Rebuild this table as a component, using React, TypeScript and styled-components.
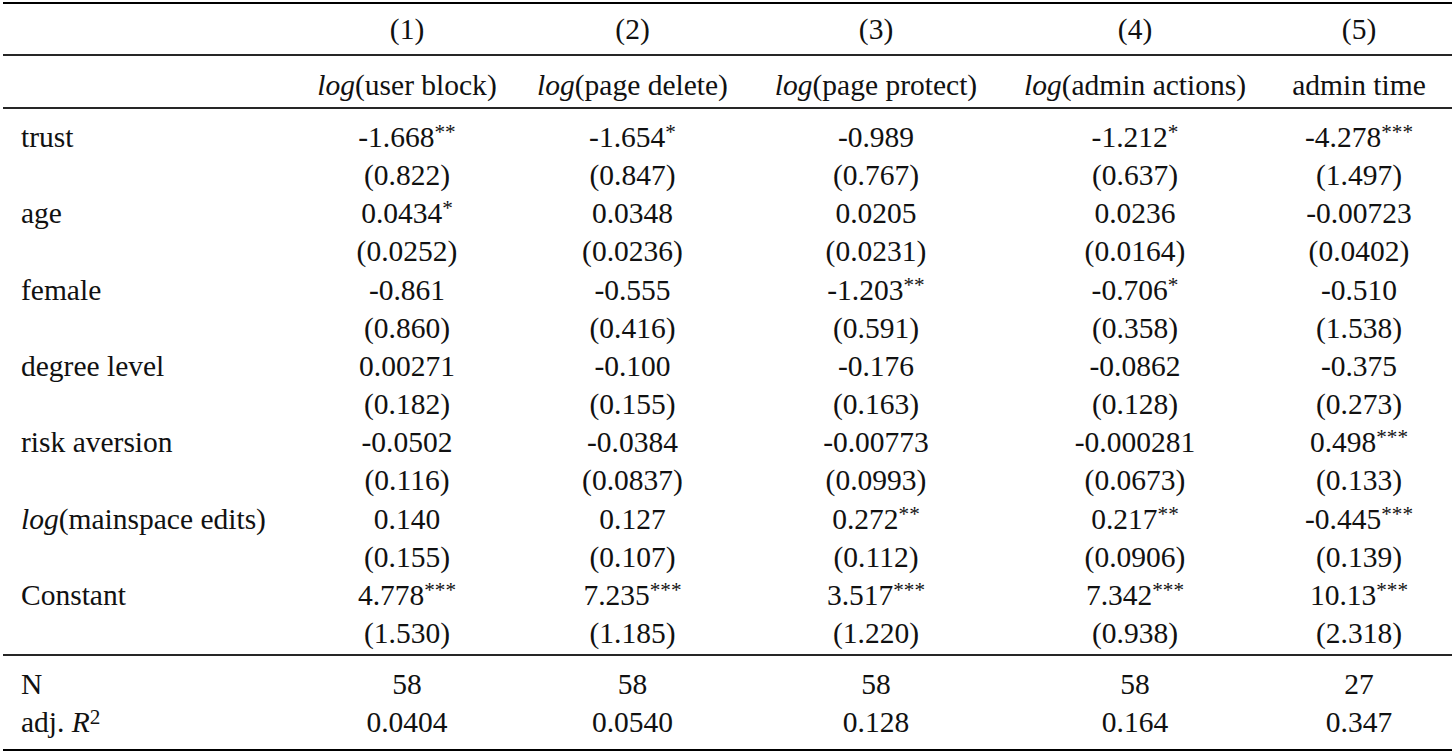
import styled, { createGlobalStyle } from "styled-components";

const GlobalStyle = createGlobalStyle`
  html, body {
    margin: 0;
    padding: 0;
    background: #ffffff;
  }
  body {
    font-family: "Liberation Serif", "DejaVu Serif", serif;
    color: #111111;
  }
`;

const Wrapper = styled.div`
  padding: 2px 0 0 3px;
`;

const Table = styled.table`
  width: 1449px;
  table-layout: fixed;
  border-collapse: collapse;
  border-top: 2px solid #000;
  border-bottom: 2px solid #000;
  font-size: 29.5px;
`;

const HeadRow = styled.tr<{ $height: number }>`
  height: ${(p) => p.$height}px;
  border-bottom: 2px solid #262626;
`;

const HeadCell = styled.th<{ $shift?: number }>`
  font-weight: normal;
  text-align: center;
  padding: ${(p) => p.$shift ?? 0}px 0 0 0;
  vertical-align: middle;
  white-space: nowrap;
`;

const Row = styled.tr<{ $rule?: boolean }>`
  ${(p) => (p.$rule ? "border-bottom: 2px solid #262626;" : "")}
`;

const LabelCell = styled.td<{ $top?: number; $bottom?: number }>`
  text-align: left;
  padding: ${(p) => p.$top ?? 0}px 0 ${(p) => p.$bottom ?? 0}px 18px;
  line-height: 38.15px;
  white-space: nowrap;
`;

const Cell = styled.td<{ $top?: number; $bottom?: number }>`
  text-align: center;
  padding: ${(p) => p.$top ?? 0}px 0 ${(p) => p.$bottom ?? 0}px 0;
  line-height: 38.15px;
  white-space: nowrap;
`;

const Stars = styled.sup`
  font-size: 0.72em;
  line-height: 0;
  vertical-align: 0.38em;
`;

const Ital = styled.i`
  font-style: italic;
`;

type Coef = [string, string];

const widths = [294, 220, 231, 256, 262, 186];

const depVars: Array<[string, string]> = [
  ["log", "user block"],
  ["log", "page delete"],
  ["log", "page protect"],
  ["log", "admin actions"],
  ["", "admin time"],
];

const vars: Array<{ label: React.ReactNode; coef: Coef[]; se: string[] }> = [
  {
    label: "trust",
    coef: [["-1.668", "**"], ["-1.654", "*"], ["-0.989", ""], ["-1.212", "*"], ["-4.278", "***"]],
    se: ["0.822", "0.847", "0.767", "0.637", "1.497"],
  },
  {
    label: "age",
    coef: [["0.0434", "*"], ["0.0348", ""], ["0.0205", ""], ["0.0236", ""], ["-0.00723", ""]],
    se: ["0.0252", "0.0236", "0.0231", "0.0164", "0.0402"],
  },
  {
    label: "female",
    coef: [["-0.861", ""], ["-0.555", ""], ["-1.203", "**"], ["-0.706", "*"], ["-0.510", ""]],
    se: ["0.860", "0.416", "0.591", "0.358", "1.538"],
  },
  {
    label: "degree level",
    coef: [["0.00271", ""], ["-0.100", ""], ["-0.176", ""], ["-0.0862", ""], ["-0.375", ""]],
    se: ["0.182", "0.155", "0.163", "0.128", "0.273"],
  },
  {
    label: "risk aversion",
    coef: [["-0.0502", ""], ["-0.0384", ""], ["-0.00773", ""], ["-0.000281", ""], ["0.498", "***"]],
    se: ["0.116", "0.0837", "0.0993", "0.0673", "0.133"],
  },
  {
    label: (
      <>
        <Ital>log</Ital>(mainspace edits)
      </>
    ),
    coef: [["0.140", ""], ["0.127", ""], ["0.272", "**"], ["0.217", "**"], ["-0.445", "***"]],
    se: ["0.155", "0.107", "0.112", "0.0906", "0.139"],
  },
  {
    label: "Constant",
    coef: [["4.778", "***"], ["7.235", "***"], ["3.517", "***"], ["7.342", "***"], ["10.13", "***"]],
    se: ["1.530", "1.185", "1.220", "0.938", "2.318"],
  },
];

const nObs = ["58", "58", "58", "58", "27"];
const adjR2 = ["0.0404", "0.0540", "0.128", "0.164", "0.347"];

function App() {
  const last = vars.length - 1;
  return (
    <Wrapper>
      <GlobalStyle />
      <Table>
        <colgroup>
          {widths.map((w, i) => (
            <col key={i} style={{ width: w }} />
          ))}
        </colgroup>
        <thead>
          <HeadRow $height={52}>
            <HeadCell />
            {[1, 2, 3, 4, 5].map((n) => (
              <HeadCell key={n} $shift={1}>
                ({n})
              </HeadCell>
            ))}
          </HeadRow>
          <HeadRow $height={53}>
            <HeadCell />
            {depVars.map(([fn, name]) => (
              <HeadCell key={name} $shift={7}>
                {fn ? (
                  <>
                    <Ital>{fn}</Ital>({name})
                  </>
                ) : (
                  name
                )}
              </HeadCell>
            ))}
          </HeadRow>
        </thead>
        <tbody>
          {vars.map((v, i) => {
            const top = i === 0 ? 9 : 0;
            const bottom = i === last ? 2 : 0;
            return [
              <Row key={`c${i}`}>
                <LabelCell $top={top}>{v.label}</LabelCell>
                {v.coef.map(([val, st], j) => (
                  <Cell key={j} $top={top}>
                    {val}
                    {st && <Stars>{st}</Stars>}
                  </Cell>
                ))}
              </Row>,
              <Row key={`s${i}`} $rule={i === last}>
                <LabelCell $bottom={bottom} />
                {v.se.map((s, j) => (
                  <Cell key={j} $bottom={bottom}>
                    ({s})
                  </Cell>
                ))}
              </Row>,
            ];
          })}
          <Row>
            <LabelCell $top={9}>N</LabelCell>
            {nObs.map((n, j) => (
              <Cell key={j} $top={9}>
                {n}
              </Cell>
            ))}
          </Row>
          <Row>
            <LabelCell $bottom={7}>
              adj. <Ital>R</Ital>
              <Stars>2</Stars>
            </LabelCell>
            {adjR2.map((r, j) => (
              <Cell key={j} $bottom={7}>
                {r}
              </Cell>
            ))}
          </Row>
        </tbody>
      </Table>
    </Wrapper>
  );
}

export default App;
